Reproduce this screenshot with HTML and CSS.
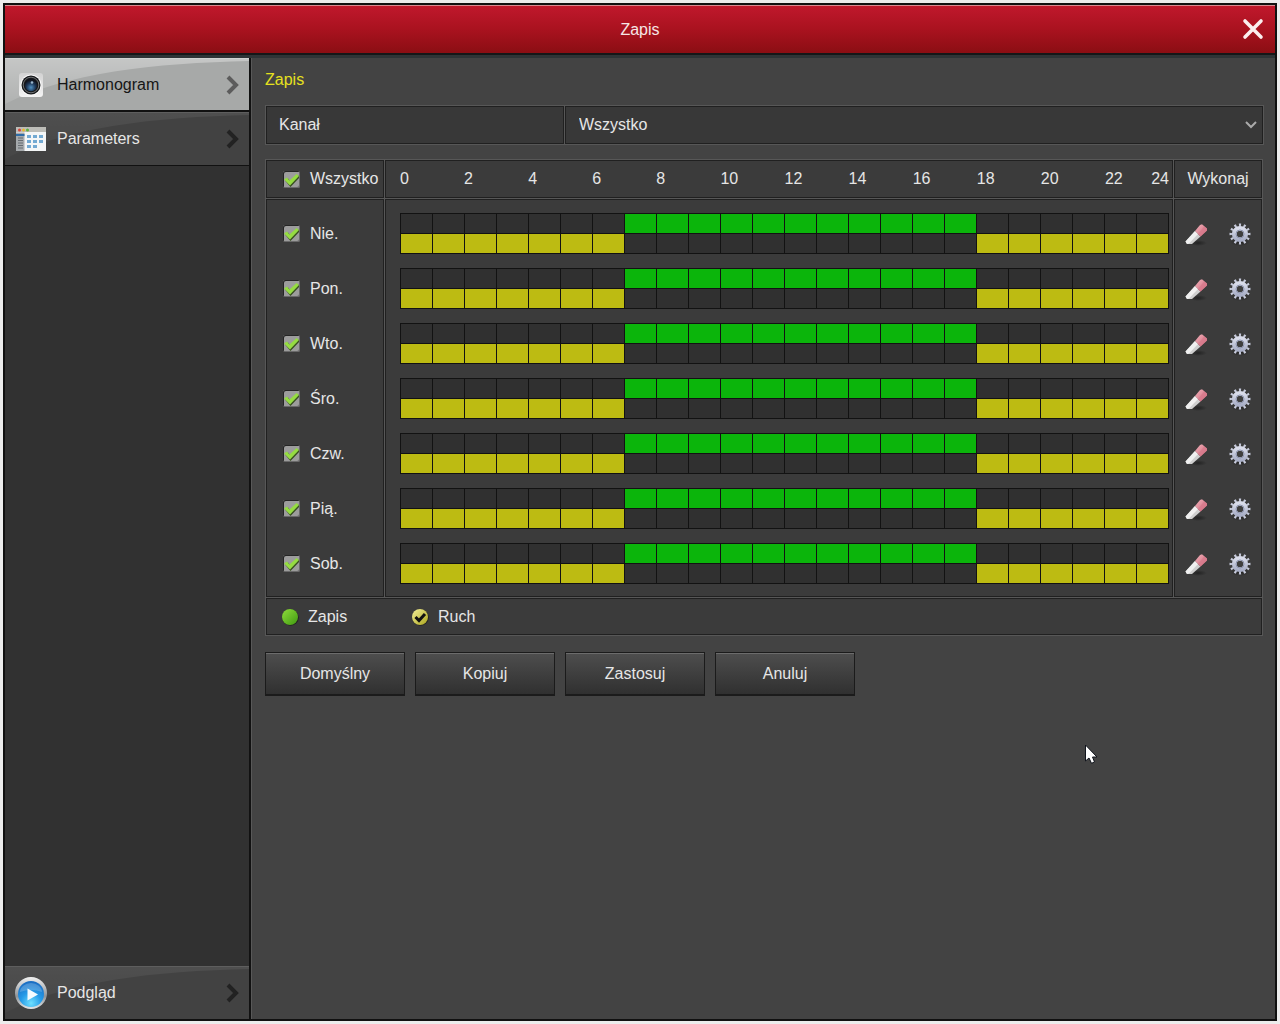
FILE: index.html
```html
<!DOCTYPE html>
<html lang="pl">
<head>
<meta charset="utf-8">
<meta name="viewport" content="width=device-width, initial-scale=1">
<title>Zapis</title>
<link rel="stylesheet" href="styles.css">
</head>
<body>
<svg class="defs" aria-hidden="true">
  <defs>
    <linearGradient id="gearFill" x1="0" y1="0" x2="0" y2="1"><stop offset="0" stop-color="#d9dcea"/><stop offset="1" stop-color="#aab0c8"/></linearGradient>
    <linearGradient id="pink" x1="0" y1="0" x2="1" y2="1"><stop offset="0" stop-color="#f0b4bc"/><stop offset=".5" stop-color="#e08c9a"/><stop offset="1" stop-color="#d26e80"/></linearGradient>
    <radialGradient id="shade"><stop offset="0" stop-color="#1c1c1c" stop-opacity=".8"/><stop offset="1" stop-color="#1c1c1c" stop-opacity="0"/></radialGradient>
  </defs>
  <symbol id="eraser" viewBox="0 0 26 26">
    <ellipse cx="15" cy="22" rx="9" ry="3" fill="url(#shade)"/>
    <path d="M2.500 20.500 12 10l5.500 5.500L9 23H4z" fill="#cfcfcf"/>
    <path d="M2.500 20.500 12 10l3 3L6 22.500 4 23z" fill="#f0f0f0"/>
    <path d="M12 10l5-6 2-.7L24 7.500V9.500l-6.500 6z" fill="url(#pink)"/>
    <path d="M15 13l6-7.500 3 2V9.500l-6.500 6z" fill="#d6788a" opacity=".7"/>
  </symbol>
  <symbol id="gear" viewBox="0 0 26 26">
    <ellipse cx="13" cy="21" rx="10" ry="4" fill="url(#shade)"/>
    <circle cx="13" cy="13" r="9" fill="none" stroke="#c6cadb" stroke-width="3" pathLength="48" stroke-dasharray="1.800 2.200" stroke-dashoffset=".9"/>
    <circle cx="13" cy="13" r="5.600" fill="none" stroke="url(#gearFill)" stroke-width="5"/>
    <circle cx="13" cy="13" r="4" fill="none" stroke="#8c93ac" stroke-width="1"/>
    <circle cx="13" cy="13" r="3" fill="#3f3f3f"/>
  </symbol>
  <symbol id="chevron" viewBox="0 0 14 20">
    <path d="M2 2l8 8-8 8" fill="none" stroke="currentColor" stroke-width="4"/>
  </symbol>
</svg>

<div class="window">
  <header class="titlebar">
    <h1 class="titlebar-text">Zapis</h1>
    <button class="close" type="button" aria-label="Zamknij">
      <svg width="22" height="22" viewBox="0 0 22 22"><path d="M3 3l16 16M19 3L3 19" stroke="#fbeeee" stroke-width="3.600" stroke-linecap="round"/></svg>
    </button>
  </header>

  <div class="body">
    <nav class="sidebar">
      <a class="nav-item active" href="#harmonogram">
        <svg class="nav-icon" viewBox="0 0 32 32">
          <defs>
            <linearGradient id="cam" x1="0" y1="0" x2="0" y2="1"><stop offset="0" stop-color="#d2d2d2"/><stop offset="1" stop-color="#f4f4f4"/></linearGradient>
            <radialGradient id="lens" cx=".5" cy=".7" r=".6"><stop offset="0" stop-color="#4f8fc0"/><stop offset=".6" stop-color="#1d3656"/><stop offset="1" stop-color="#10131c"/></radialGradient>
          </defs>
          <rect x="4" y="4" width="24" height="24" rx="3" fill="url(#cam)"/>
          <circle cx="16" cy="16" r="10.500" fill="#fafafa"/>
          <circle cx="16" cy="16" r="9.500" fill="#16181a"/>
          <circle cx="16" cy="16" r="7.800" fill="none" stroke="#87898b" stroke-width=".8"/>
          <circle cx="16" cy="16" r="6.200" fill="url(#lens)"/>
          <circle cx="17" cy="13.500" r="1.300" fill="#9ab6cc"/>
        </svg>
        <span class="nav-label">Harmonogram</span>
        <svg class="nav-arrow" aria-hidden="true"><use href="#chevron"/></svg>
      </a>
      <a class="nav-item" href="#parameters">
        <svg class="nav-icon" viewBox="0 0 32 32">
          <path d="M1 4h30v24H1z" fill="#f4f6f7"/>
          <path d="M1 4h30v5H1z" fill="#bdbdb8"/>
          <circle cx="4.500" cy="7" r="1.500" fill="#d8453a"/><circle cx="8.500" cy="7" r="1.500" fill="#e9b92f"/><circle cx="12.500" cy="7" r="1.500" fill="#5cb040"/>
          <path d="M1 9.500h8.500V28H1z" fill="#a5a9ac"/>
          <path d="M1 11h8.500v2H1z" fill="#2f6da8"/>
          <path d="M3 15h5M3 17.500h5M3 20h5M3 22.500h5M3 25h5" stroke="#666c72"/>
          <path d="M12 12h4v3h-4zM18 12h4v3h-4zM24 12h4v3h-4zM12 17h4v3h-4zM18 17h4v3h-4zM24 17h4v3h-4zM12 22h4v3h-4zM18 22h4v3h-4z" fill="#72a9d2"/>
        </svg>
        <span class="nav-label">Parameters</span>
        <svg class="nav-arrow" aria-hidden="true"><use href="#chevron"/></svg>
      </a>
      <a class="nav-item last" href="#podglad">
        <svg class="nav-icon" viewBox="0 0 32 32">
          <defs>
            <radialGradient id="play" cx=".5" cy=".85" r=".8"><stop offset="0" stop-color="#6fe0ff"/><stop offset=".5" stop-color="#259be8"/><stop offset="1" stop-color="#1b6fc4"/></radialGradient>
            <linearGradient id="rim" x1="0" y1="0" x2="0" y2="1"><stop offset="0" stop-color="#f2f2f2"/><stop offset=".6" stop-color="#909498"/><stop offset="1" stop-color="#e2e6e8"/></linearGradient>
          </defs>
          <ellipse cx="16" cy="16" rx="16" ry="16" fill="url(#rim)"/>
          <circle cx="16" cy="17" r="13" fill="url(#play)"/>
          <path d="M5 15a11 9 0 0 1 22 0q-11-4-22 0z" fill="#fff" opacity=".2"/>
          <path d="M12.500 11.500v12L23 17.500z" fill="#f3fbff"/>
        </svg>
        <span class="nav-label">Podgląd</span>
        <svg class="nav-arrow" aria-hidden="true"><use href="#chevron"/></svg>
      </a>
    </nav>

    <main class="content">
      <h2 class="heading">Zapis</h2>

      <div class="channel">
        <label class="channel-label" for="channel">Kanał</label>
        <select class="channel-select" id="channel"><option>Wszystko</option></select>
      </div>

      <table class="schedule">
        <colgroup><col class="col-day"><col><col class="col-actions"></colgroup>
        <thead>
          <tr>
            <th scope="col"><label class="day"><input class="check" type="checkbox" checked>Wszystko</label></th>
            <th scope="col">
              <div class="hours">
                <span>0</span><span>2</span><span>4</span><span>6</span><span>8</span><span>10</span><span>12</span><span>14</span><span>16</span><span>18</span><span>20</span><span class="hours-end"><span>22</span><span>24</span></span>
              </div>
            </th>
            <th class="actions-head" scope="col">Wykonaj</th>
          </tr>
        </thead>
        <tbody id="days"></tbody>
        <tfoot>
          <tr>
            <td colspan="3">
              <div class="legend">
                <span class="legend-item">
                  <svg width="18" height="18" viewBox="0 0 18 18"><defs><linearGradient id="green" x1="0" y1="0" x2="1" y2="1"><stop offset="0" stop-color="#8fdc3c"/><stop offset="1" stop-color="#3f9a10"/></linearGradient></defs><circle cx="9.500" cy="9.500" r="8.300" fill="#222"/><circle cx="9" cy="9" r="8" fill="url(#green)"/></svg>
                  Zapis
                </span>
                <span class="legend-item">
                  <svg width="18" height="18" viewBox="0 0 18 18"><defs><linearGradient id="yellow" x1="0" y1="0" x2="1" y2="1"><stop offset="0" stop-color="#f4f09a"/><stop offset="1" stop-color="#aaa41c"/></linearGradient></defs><circle cx="9.500" cy="9.500" r="8.300" fill="#222"/><circle cx="9" cy="9" r="8" fill="url(#yellow)"/><path d="M4.500 9l3.500 3.500L14 6" fill="none" stroke="#111" stroke-width="3"/></svg>
                  Ruch
                </span>
              </div>
            </td>
          </tr>
        </tfoot>
      </table>

      <div class="buttons">
        <button class="btn" type="button">Domyślny</button>
        <button class="btn" type="button">Kopiuj</button>
        <button class="btn" type="button">Zastosuj</button>
        <button class="btn" type="button">Anuluj</button>
      </div>
    </main>
  </div>
</div>

<svg class="pointer" viewBox="0 0 13 20" aria-hidden="true"><path d="M.5 1v16l3.500-3 2.500 5.300 3-1.300L7.500 13H12z" fill="#fff" stroke="#10141c"/></svg>
<script src="schedule.js"></script>
</body>
</html>
```

FILE: schedule.js
```js
const days = ["Nie.", "Pon.", "Wto.", "Śro.", "Czw.", "Pią.", "Sob."];
const recordFrom = 7;
const recordTo = 18;

function strip() {
  let cells = "";
  for (let h = 0; h < 24; h++) {
    cells += h >= recordFrom && h < recordTo ? '<i class="slot record"></i>' : '<i class="slot"></i>';
  }
  for (let h = 0; h < 24; h++) {
    cells += h < recordFrom || h >= recordTo ? '<i class="slot motion"></i>' : '<i class="slot"></i>';
  }
  return cells;
}

document.getElementById("days").innerHTML = days.map(name => `
  <tr>
    <td><label class="day"><input class="check" type="checkbox" checked>${name}</label></td>
    <td><div class="timeline">${strip()}</div></td>
    <td>
      <div class="actions">
        <button class="icon-btn" type="button" aria-label="Wyczyść"><svg><use href="#eraser"/></svg></button>
        <button class="icon-btn" type="button" aria-label="Ustaw"><svg><use href="#gear"/></svg></button>
      </div>
    </td>
  </tr>`).join("");
```

FILE: styles.css
```css
* { box-sizing: border-box; }

body {
  margin: 0;
  padding: 3px;
  background: #ececec;
  color: #e6e6e6;
  font: 16px/20px "Liberation Sans", Arial, sans-serif;
}

button, select, input { font: inherit; color: inherit; margin: 0; }

.defs { position: absolute; width: 0; height: 0; }

.window {
  display: flex;
  flex-direction: column;
  min-height: calc(100vh - 6px);
  border: 2px solid #101010;
  background: #434343;
}

.titlebar {
  display: grid;
  grid-template-columns: 44px 1fr 44px;
  align-items: center;
  height: 50px;
  border-top: 1px solid #d98a90;
  border-bottom: 2px solid #151718;
  background: linear-gradient(#c0182c, #a9121f 50%, #8b0e13);
}

.titlebar-text {
  grid-column: 2;
  margin: 0;
  color: #f6e6e6;
  font-size: 16px;
  font-weight: normal;
  text-align: center;
}

.close {
  display: grid;
  place-items: center;
  align-self: start;
  height: 46px;
  padding: 0;
  border: 0;
  background: none;
}

.body {
  display: flex;
  flex: 1;
  border-top: 3px solid #2e3436;
}

.sidebar {
  display: flex;
  flex-direction: column;
  flex: none;
  width: 246px;
  border-right: 2px solid #111;
  background: #313131;
}

.nav-item {
  display: flex;
  align-items: center;
  gap: 10px;
  height: 54px;
  padding: 0 9px 0 10px;
  border-top: 1px solid #5e5e5e;
  border-bottom: 1px solid #111;
  background: #424242 url("data:image/svg+xml,%3Csvg xmlns='http://www.w3.org/2000/svg' viewBox='0 0 244 52' preserveAspectRatio='none'%3E%3Cdefs%3E%3ClinearGradient id='g' x2='0' y2='1'%3E%3Cstop stop-color='%23fff' stop-opacity='.07'/%3E%3Cstop offset='1' stop-color='%23fff' stop-opacity='.02'/%3E%3C/linearGradient%3E%3C/defs%3E%3Cpath d='M0 0H244V2C150 4 60 14 0 46Z' fill='url(%23g)'/%3E%3C/svg%3E") 0 0 / 100% 100% no-repeat;
  color: #e6e6e6;
  text-decoration: none;
}

.nav-item.active {
  border-top-color: #d0d2d1;
  border-bottom-width: 2px;
  background-color: #a7a9a8;
  background-image: url("data:image/svg+xml,%3Csvg xmlns='http://www.w3.org/2000/svg' viewBox='0 0 244 52' preserveAspectRatio='none'%3E%3Cdefs%3E%3ClinearGradient id='g' x2='0' y2='1'%3E%3Cstop stop-color='%23fff' stop-opacity='.34'/%3E%3Cstop offset='1' stop-color='%23fff' stop-opacity='.1'/%3E%3C/linearGradient%3E%3C/defs%3E%3Cpath d='M0 0H244V2C150 4 60 14 0 46Z' fill='url(%23g)'/%3E%3C/svg%3E");
  color: #161616;
}

.nav-item.last { margin-top: auto; border-bottom: 0; height: 53px; }
.nav-icon { width: 32px; height: 32px; }
.nav-label { flex: 1; }
.nav-arrow { width: 14px; height: 20px; color: #222; }
.active .nav-arrow { color: #5c5c5c; }

.content {
  flex: 1;
  min-width: 0;
  padding: 12px 11px 24px 13px;
  border-left: 1px solid #585858;
}

.heading {
  margin: 0 0 15px;
  color: #e6e01e;
  font-size: 16px;
  font-weight: normal;
}

.channel {
  display: flex;
  height: 40px;
  margin-bottom: 14px;
  border: 1px solid #575757;
  background: #383838;
}

.channel-label {
  width: 298px;
  padding: 9px 13px;
  box-shadow: inset 0 0 0 1px #202020;
}

.channel-select {
  flex: 1;
  appearance: none;
  padding: 0 14px;
  border: 0;
  border-left: 1px solid #575757;
  border-radius: 0;
  background: #383838 url("data:image/svg+xml,%3Csvg xmlns='http://www.w3.org/2000/svg' width='12' height='8'%3E%3Cpath d='M1 1l5 5 5-5' fill='none' stroke='%23aaa' stroke-width='2'/%3E%3C/svg%3E") right 6px center no-repeat;
  box-shadow: inset 0 0 0 1px #202020;
}

.schedule {
  width: calc(100% - 1px);
  table-layout: fixed;
  border-spacing: 0;
  border: 1px solid #575757;
  border-left: 0;
  background: #3b3b3b;
}

.col-day { width: 119px; }
.col-actions { width: 89px; }

.schedule th,
.schedule td {
  padding: 0;
  border-left: 1px solid #575757;
  font-weight: normal;
  text-align: left;
}

.schedule th {
  height: 38px;
  box-shadow: inset 0 0 0 1px #202020;
}

.schedule tbody td {
  height: 55px;
  box-shadow: inset 1px 0 #202020, inset -1px 0 #202020;
}

.schedule tbody tr:first-child td {
  height: 63px;
  padding-top: 7px;
  border-top: 1px solid #575757;
  box-shadow: inset 1px 1px #202020, inset -1px 0 #202020;
}

.schedule tbody tr:last-child td {
  height: 61px;
  padding-bottom: 6px;
  box-shadow: inset 1px 0 #202020, inset -1px -1px #202020;
}

.schedule tfoot td {
  height: 38px;
  border-top: 1px solid #575757;
  box-shadow: inset 0 0 0 1px #202020;
}

.day {
  display: flex;
  align-items: center;
  gap: 10px;
  padding-left: 17px;
}

.check {
  flex: none;
  appearance: none;
  width: 17px;
  height: 17px;
  border-radius: 2px;
  background: #9c9c9c;
  box-shadow: inset 1px 1px #252525, inset -1px -1px #6a6a6a;
}

.check:checked {
  background: #9c9c9c url("data:image/svg+xml,%3Csvg xmlns='http://www.w3.org/2000/svg' width='17' height='17'%3E%3Cpath d='M2 9.500l3-2 2.500 3L14.500 4l2.500 2-9.500 10z' fill='%23385020'/%3E%3Cpath d='M1 8.500l3-2 2.500 3L13.500 3l2.500 2L7 14.500z' fill='%2395dc42'/%3E%3C/svg%3E") center no-repeat;
}

.hours {
  display: grid;
  grid-template-columns: repeat(12, 1fr);
  padding: 0 4px 0 15px;
}

.hours-end { display: flex; justify-content: space-between; }

.schedule .actions-head { text-align: center; }

.timeline {
  display: grid;
  grid-template-columns: repeat(24, 1fr);
  grid-template-rows: 19px 19px;
  gap: 1px;
  margin: 0 4px 0 15px;
  padding: 1px;
  background: #121212;
}

.slot { background: #303030; }
.record { background: #0bb50b; }
.motion { background: #bdbb12; }

.actions {
  display: flex;
  justify-content: space-between;
  padding: 0 9px;
}

.icon-btn {
  width: 26px;
  height: 26px;
  padding: 0;
  border: 0;
  background: none;
}

.icon-btn svg { display: block; width: 26px; height: 26px; }

.legend { display: flex; padding-left: 15px; }

.legend-item {
  display: flex;
  align-items: center;
  gap: 9px;
  width: 130px;
}

.buttons {
  display: flex;
  gap: 10px;
  margin-top: 16px;
}

.btn {
  width: 140px;
  height: 44px;
  padding: 0;
  border: 1px solid #1b1b1b;
  border-bottom-width: 2px;
  background: linear-gradient(#4e4e4e, #303030);
  box-shadow: inset 0 1px #6c6c6c;
}

.pointer {
  position: absolute;
  left: 1085px;
  top: 744px;
  width: 13px;
  height: 20px;
}
```
